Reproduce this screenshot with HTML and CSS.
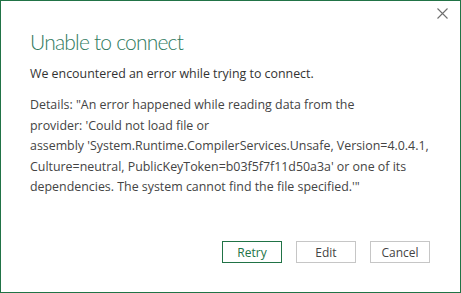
FILE: index.html
```html
<!DOCTYPE html>
<html lang="en">
<head>
  <meta charset="UTF-8" />
  <title>Unable to connect</title>
  <link rel="stylesheet" href="styles.css">
</head>
<body>
  <div class="dialog">
    <div class="top-bar">
      <span class="close-btn">
        <svg width="11" height="11" viewBox="0 0 11 11">
          <path d="M0.5 0.5 L10.5 10.5 M10.5 0.5 L0.5 10.5" stroke="#6f6f6f" stroke-width="1.1" fill="none"/>
        </svg>
      </span>
    </div>
    <div class="content">
      <h1>Unable to connect</h1>
      <p class="summary">We encountered an error while trying to connect.</p>
      <p class="details">Details: "An error happened while reading data from the<br>provider: 'Could not load file or<br>assembly 'System.Runtime.CompilerServices.Unsafe, Version=4.0.4.1,<br>Culture=neutral, PublicKeyToken=b03f5f7f11d50a3a' or one of its<br>dependencies. The system cannot find the file specified.'"</p>
    </div>
    <div class="actions">
      <button class="btn primary">Retry</button>
      <button class="btn">Edit</button>
      <button class="btn">Cancel</button>
    </div>
  </div>
</body>
</html>
```

FILE: styles.css
```css
* {
  box-sizing: border-box;
  margin: 0;
  padding: 0;
}

body {
  font-family: 'Open Sans', sans-serif;
  background: #fff;
}

.dialog {
  width: 461px;
  height: 293px;
  border: 1px solid #217346;
  display: flex;
  flex-direction: column;
}

.top-bar {
  display: flex;
  justify-content: flex-end;
  padding: 7px 12px 0 0;
  height: 25px;
}

.close-btn {
  display: flex;
  width: 11px;
  height: 11px;
}

.content {
  padding: 0 29px;
  flex: 1;
}

.content h1 {
  font-family: 'Lato', sans-serif;
  font-size: 21px;
  font-weight: 300;
  letter-spacing: -0.8px;
  color: #2f7a60;
  line-height: 30px;
  padding-top: 1px;
  margin-bottom: 7px;
}

.summary {
  font-size: 12.4px;
  color: #333;
  line-height: 20px;
  margin-bottom: 10px;
}

.details {
  font-size: 12.4px;
  color: #444;
  line-height: 20.5px;
  white-space: nowrap;
  padding-top: 1px;
}

.actions {
  display: flex;
  justify-content: flex-end;
  gap: 14px;
  padding: 0 30px 29px 0;
}

.btn {
  width: 60px;
  height: 22px;
  background: #fff;
  border: 1px solid #c6c6c6;
  font-family: 'Open Sans', sans-serif;
  font-size: 12px;
  color: #444;
}

.btn.primary {
  border-color: #217346;
  color: #217346;
}
```
